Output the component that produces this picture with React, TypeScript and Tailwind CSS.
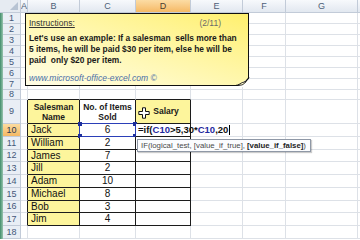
import React from 'react';

const GRID = 'grid grid-cols-[3px_18px_7px_52px_56px_55px_52px_43px_72px_1fr]';
const FONT = "font-['Liberation_Sans',Arial,sans-serif]";

const SALES: [string, string][] = [
  ['Jack', '6'],
  ['William', '2'],
  ['James', '7'],
  ['Jill', '2'],
  ['Adam', '10'],
  ['Michael', '8'],
  ['Bob', '3'],
  ['Jim', '4'],
];
const SALES_H = ['h-[13px]', 'h-[13px]', 'h-[12px]', 'h-[13px]', 'h-[13px]', 'h-[13px]', 'h-[12px]', 'h-[13px]'];
const TOP_H = ['h-[11px]', 'h-[11px]', 'h-[11px]', 'h-[11px]', 'h-[11px]', 'h-[11px]', 'h-[11px]'];

const grid = 'border-r border-b border-[#dde1e7] bg-white';
const box = 'border-r border-b border-[#1c1c1c]';

const RowHead: React.FC<{ n: number; active?: boolean }> = ({ n, active }) => (
  <>
    <div className="bg-linear-to-r from-[#3f8d6b] to-[#97c4ae]" />
    <div
      className={`flex items-center justify-center border-r border-b border-[#c2cbd8] text-[9px] leading-none ${
        active ? 'bg-linear-to-b from-[#fcdca0] to-[#f4b862] text-[#2f3c52]' : 'bg-[#e9eef5] text-[#44587a]'
      }`}
    >
      {n}
    </div>
  </>
);

const ColHead: React.FC<{ l: string; active?: boolean }> = ({ l, active }) => (
  <div
    className={`flex items-center justify-center border-r border-b border-[#c2cbd8] text-[9px] leading-none ${
      active ? 'bg-linear-to-b from-[#fcdca4] to-[#f5b964] text-[#4a4030]' : 'bg-linear-to-b from-[#f7f9fc] to-[#e2e8f0] text-[#4d5f78]'
    }`}
  >
    {l}
  </div>
);

// empty E..rest cells
const Blanks: React.FC = () => (
  <>
    <div className={grid} />
    <div className={grid} />
    <div className={grid} />
    <div className="border-b border-[#dde1e7] bg-white" />
  </>
);

const Handle: React.FC<{ pos: string }> = ({ pos }) => (
  <span className={`absolute h-[4px] w-[4px] bg-[#1d2f9c] ${pos}`} />
);

export default function App() {
  return (
    <div className={`relative h-[240px] w-[360px] overflow-hidden bg-white ${FONT}`}>
      {/* column headers */}
      <div className={`${GRID} h-[13px]`}>
        <div className="relative col-span-2 border-r border-b border-[#c2cbd8] bg-[#e6ebf2]">
          <svg className="absolute right-[2px] bottom-[2px]" width="8" height="8" viewBox="0 0 8 8">
            <path d="M8 0 L8 8 L0 8 Z" fill="#b7c3d3" />
          </svg>
        </div>
        <ColHead l="A" />
        <ColHead l="B" />
        <ColHead l="C" />
        <ColHead l="D" active />
        <ColHead l="E" />
        <ColHead l="F" />
        <ColHead l="G" />
        <div className="border-b border-[#c2cbd8] bg-linear-to-b from-[#f7f9fc] to-[#e2e8f0]" />
      </div>

      {/* rows 1-7, under the note */}
      {TOP_H.map((h, i) => (
        <div key={i} className={`${GRID} ${h}`}>
          <RowHead n={i + 1} />
          <div className={grid} />
          <div className={grid} />
          <div className={grid} />
          <div className={grid} />
          <Blanks />
        </div>
      ))}

      {/* row 8 */}
      <div className={`${GRID} h-[10px]`}>
        <RowHead n={8} />
        <div className={grid} />
        <div className="border-b border-[#1c1c1c] border-r border-r-[#dde1e7] bg-white" />
        <div className="border-b border-[#1c1c1c] border-r border-r-[#dde1e7] bg-white" />
        <div className="border-b border-[#1c1c1c] border-r border-r-[#dde1e7] bg-white" />
        <Blanks />
      </div>

      {/* row 9 — table headers */}
      <div className={`${GRID} h-[24px]`}>
        <RowHead n={9} />
        <div className="border-r border-r-[#1c1c1c] border-b border-b-[#dde1e7] bg-white" />
        <div className={`${box} flex items-center justify-center bg-[#fdf59c] text-center text-[8.5px] font-bold leading-[10px] text-[#1a1a1a]`}>
          Salesman<br />Name
        </div>
        <div className={`${box} flex items-center justify-center bg-white text-center text-[8.5px] font-bold leading-[10px] text-[#1a1a1a]`}>
          No. of Items<br />Sold
        </div>
        <div className={`${box} relative flex items-center justify-center bg-[#fdf59c] pl-[6px] text-[8.5px] font-bold text-[#1a1a1a]`}>
          Salary
          <svg className="absolute left-[2px] top-[7px]" width="12" height="12" viewBox="0 0 12 12">
            <path d="M4.5 0.8h3v3.7h3.7v3h-3.7v3.7h-3v-3.7h-3.7v-3h3.7z" fill="#fff" stroke="#111" strokeWidth="1" />
          </svg>
        </div>
        <Blanks />
      </div>

      {/* rows 10-17 — data */}
      {SALES.map(([name, qty], i) => (
        <div key={name} className={`${GRID} ${SALES_H[i]}`}>
          <RowHead n={i + 10} active={i === 0} />
          <div className="border-r border-r-[#1c1c1c] border-b border-b-[#dde1e7] bg-white" />
          <div className={`${box} flex items-center bg-[#fdf59c] pl-[3px] text-[10px] leading-none text-[#111]`}>{name}</div>
          <div className={`${box} relative flex items-center justify-center bg-white text-[10px] leading-none text-[#111]`}>
            {qty}
            {i === 0 && (
              <span className="absolute -top-px -left-px -right-px -bottom-px border border-[#2b3fb8]">
                <Handle pos="-top-[2px] -left-[2px]" />
                <Handle pos="-bottom-[2px] -left-[2px]" />
                <Handle pos="-top-[2px] -right-[2px]" />
                <Handle pos="-bottom-[2px] -right-[2px]" />
              </span>
            )}
          </div>
          <div className={`${box} relative z-10 flex items-center bg-white`}>
            {i === 0 && (
              <span className="flex items-center whitespace-nowrap pl-[2px] text-[9.5px] font-bold leading-none text-[#111]">
                =if(<span className="text-[#1f2aa0]">C10</span>&gt;5,30*<span className="text-[#1f2aa0]">C10</span>,20
                <span className="ml-[1px] inline-block h-[10px] w-px bg-black" />
              </span>
            )}
          </div>
          <Blanks />
        </div>
      ))}

      {/* row 18 */}
      <div className={`${GRID} h-[13px]`}>
        <RowHead n={18} />
        <div className={grid} />
        <div className={grid} />
        <div className={grid} />
        <div className={grid} />
        <Blanks />
      </div>

      {/* Instructions note */}
      <div className="absolute left-[25px] top-[13px] h-[73px] w-[224px] border-[1.5px] border-[#111] bg-linear-to-tr from-[#fffde6] via-[#fff7ae] to-[#fff06c] px-[3px] pt-[4px] text-[#1a1a1a]">
        <div className="flex h-[11px] items-center justify-between text-[8.5px] leading-[11px]">
          <span className="underline text-[#333]">Instructions:</span>
          <span className="mr-[24px] text-[#6a6a6a]">(2/11)</span>
        </div>
        <div className="mt-[4px] text-[8.4px] font-bold leading-[11px] whitespace-pre">
          {"Let's use an example: If a salesman  sells more than\n5 items, he will be paid $30 per item, else he will be\npaid  only $20 per item."}
        </div>
        <div className="mt-[7px] text-[8.5px] italic leading-[11px] text-[#4a6ea6]">www.microsoft-office-excel.com ©</div>
        {/* curled corner */}
        <svg className="absolute -right-[2px] -bottom-[2px]" width="14" height="10" viewBox="0 0 14 10">
          <path d="M14 0 L14 10 L0 10 Z" fill="#fff" />
          <path d="M0 8.3 Q7 8.6 12.6 1.2 L12.6 0" fill="none" stroke="#111" strokeWidth="1.3" />
          <path d="M2 8 Q6 5 10 4.5 Q9 6.5 6 8 Z" fill="#fffad0" stroke="#111" strokeWidth="0.8" />
        </svg>
      </div>

      {/* function tooltip */}
      <div className="absolute left-[137px] top-[139px] z-20 flex h-[13px] w-[174px] items-center whitespace-nowrap border border-[#8f98a6] bg-[#fbfcfe] px-[3px] text-[7.8px] leading-none text-[#4a4a4a] shadow-[1px_1px_1px_rgba(0,0,0,0.2)]">
        IF(logical_test, [value_if_true], <span className="ml-[2px] font-bold text-[#222]">[value_if_false]</span>)
      </div>
    </div>
  );
}
